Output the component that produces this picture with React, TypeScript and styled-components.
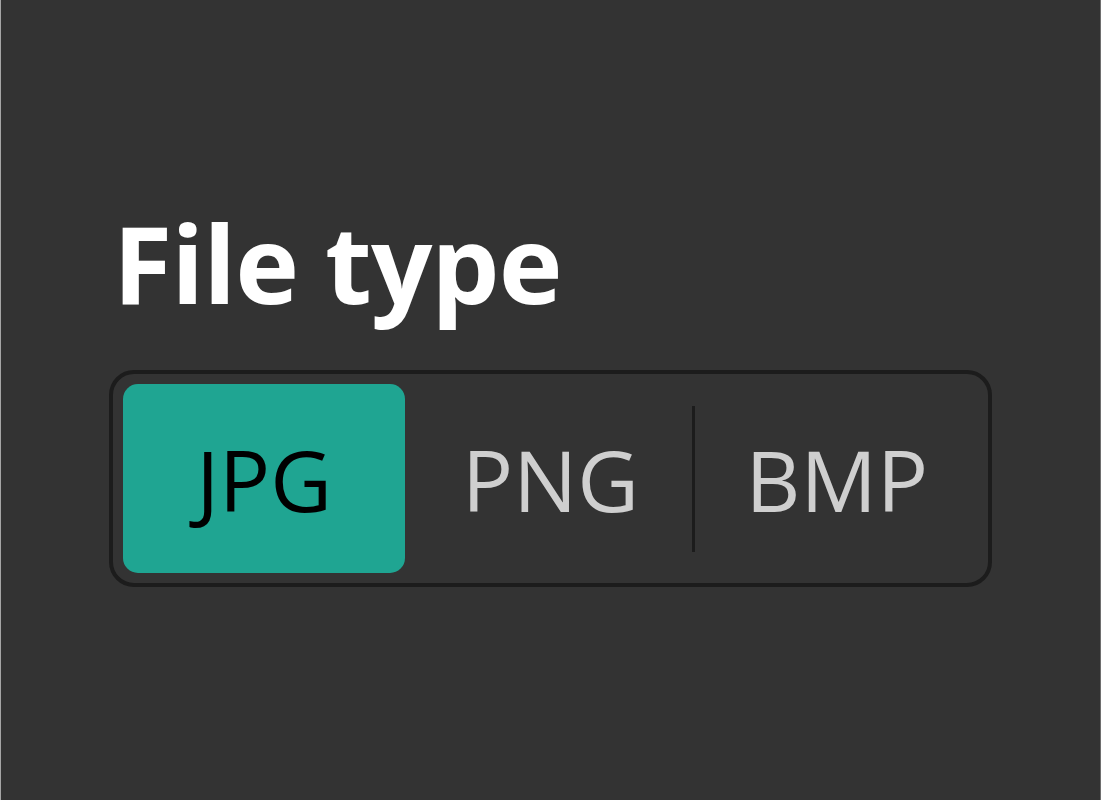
import React, { useState } from 'react';
import styled, { createGlobalStyle } from 'styled-components';

const GlobalStyle = createGlobalStyle`
  html, body {
    margin: 0;
    padding: 0;
    background: #333333;
  }
`;

const Page = styled.div`
  box-sizing: border-box;
  width: 1101px;
  height: 800px;
  background: #333333;
  border-left: 1px solid #a6a6a6;
  border-right: 1px solid #6e6e6e;
  padding: 198px 0 0 108px;
  font-family: 'Open Sans', 'Liberation Sans', sans-serif;
`;

const Title = styled.h1`
  margin: 0 0 42px 4px;
  font-size: 108px;
  font-weight: 700;
  letter-spacing: -1px;
  line-height: 130px;
  color: #ffffff;
`;

const Segmented = styled.div`
  box-sizing: border-box;
  width: 883px;
  height: 217px;
  padding: 10px;
  border: 4px solid #1c1c1c;
  border-radius: 25px;
  background: #333333;
  display: grid;
  grid-template-columns: repeat(3, 1fr);
  column-gap: 4px;
  align-items: stretch;
`;

const Option = styled.button<{ $active: boolean; $divider: boolean }>`
  position: relative;
  margin: 0;
  padding: 0;
  border: none;
  border-radius: 15px;
  font-family: inherit;
  font-size: 85px;
  font-weight: 400;
  color: ${p => (p.$active ? '#000000' : '#cfcfcf')};
  background: ${p => (p.$active ? '#1fa592' : 'transparent')};
  display: flex;
  align-items: center;
  justify-content: center;
  cursor: pointer;

  &::before {
    content: '';
    display: ${p => (p.$divider ? 'block' : 'none')};
    position: absolute;
    left: -3.5px;
    top: 22px;
    bottom: 21px;
    width: 3px;
    background: #1c1c1c;
  }
`;

const types = ['JPG', 'PNG', 'BMP'];

export default function App() {
  const [active, setActive] = useState(0);
  return (
    <Page>
      <GlobalStyle />
      <Title>File type</Title>
      <Segmented>
        {types.map((t, i) => (
          <Option
            key={t}
            $active={i === active}
            $divider={i > 0 && i !== active && i - 1 !== active}
            onClick={() => setActive(i)}
          >
            {t}
          </Option>
        ))}
      </Segmented>
    </Page>
  );
}
